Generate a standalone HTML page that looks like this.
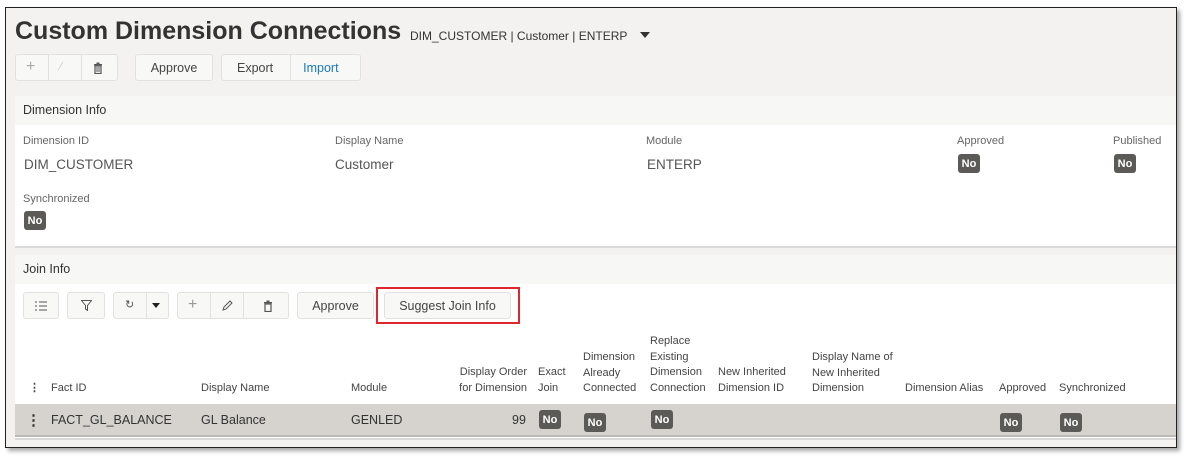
<!DOCTYPE html>
<html><head><meta charset="utf-8"><style>
*{margin:0;padding:0;box-sizing:border-box}
body{width:1187px;height:460px;background:#fff;font-family:"Liberation Sans",sans-serif;position:relative;overflow:hidden;color:#333}
.a{position:absolute;white-space:nowrap}
#frame{position:absolute;left:5px;top:7px;width:1172px;height:441px;border:1px solid #222;background:#f4f1f1;overflow:hidden;box-shadow:3px 3px 4px rgba(0,0,0,.35)}
.panel{position:absolute;left:9px;width:1170px;background:#fff;border-bottom:2px solid #dcdad8}
.ph{position:absolute;left:0;top:0;width:100%;background:#f7f7f6;font-size:12.5px;color:#333;padding-left:8px}
.btn{position:absolute;height:27px;border:1px solid #e3e1df;border-radius:3px;background:#f8f8f7;font-size:12.5px;color:#444;display:flex;align-items:center;justify-content:center}
.lbl{font-size:11px;color:#666}
.val{font-size:13.5px;color:#555}
.no{position:absolute;background:#5c5a56;color:#fff;font-weight:bold;font-size:11px;border-radius:3px;width:22px;height:19px;display:flex;align-items:center;justify-content:center}
.th{font-size:11px;color:#444;line-height:15.7px}
.td{font-size:12.5px;color:#333}
.sep{position:absolute;top:0;width:1px;height:100%;background:#e3e1df}
</style></head><body>
<div id="frame">
<div class="a" style="left:9px;top:9px;font-size:25px;font-weight:bold;color:#333">Custom Dimension Connections</div>
<div class="a" style="left:404px;top:21px;font-size:12px;color:#333">DIM_CUSTOMER | Customer | ENTERP</div>
<div class="a" style="left:634px;top:24px;width:0;height:0;border-left:5px solid transparent;border-right:5px solid transparent;border-top:6px solid #333"></div>

<div class="btn" style="left:9px;top:46px;width:103px;">
 <div class="sep" style="left:32px"></div><div class="sep" style="left:65px"></div>
 <span class="a" style="left:10px;top:3px;color:#aaa;font-size:16px">+</span>
 <span class="a" style="left:44px;top:4px;color:#ccc;font-size:12px">&#x2215;</span>
 <svg class="a" style="left:77px;top:7px" width="10" height="12" viewBox="0 0 10 12"><rect x="1" y="2" width="8" height="1.4" fill="#555"/><rect x="3.5" y="0.5" width="3" height="1.5" fill="#555"/><rect x="2" y="4" width="6" height="7.5" fill="none" stroke="#555" stroke-width="1.2"/><path d="M4 5v5M6 5v5" stroke="#555"/></svg>
</div>
<div class="btn" style="left:129px;top:46px;width:78px">Approve</div>
<div class="btn" style="left:215px;top:46px;width:140px;justify-content:flex-start">
 <span style="margin-left:15px">Export</span><div class="sep" style="left:68px"></div>
 <span style="margin-left:30px;color:#1a79b5">Import</span></div>

<div class="panel" style="top:88px;height:152px">
 <div class="ph" style="height:29px;line-height:28px">Dimension Info</div>
 <div class="a lbl" style="left:8px;top:39px">Dimension ID</div>
 <div class="a val" style="left:9px;top:61px">DIM_CUSTOMER</div>
 <div class="a lbl" style="left:320px;top:39px">Display Name</div>
 <div class="a val" style="left:320px;top:61px">Customer</div>
 <div class="a lbl" style="left:631px;top:39px">Module</div>
 <div class="a val" style="left:632px;top:61px">ENTERP</div>
 <div class="a lbl" style="left:942px;top:39px">Approved</div>
 <div class="no" style="left:943px;top:58px">No</div>
 <div class="a lbl" style="left:1098px;top:39px">Published</div>
 <div class="no" style="left:1099px;top:58px">No</div>
 <div class="a lbl" style="left:8px;top:97px">Synchronized</div>
 <div class="no" style="left:9px;top:115px">No</div>
</div>

<div class="panel" style="top:247px;height:185px">
 <div class="ph" style="height:29px;line-height:28px">Join Info</div>
 <div class="btn" style="left:8px;top:37px;width:36px"><svg width="12" height="10"><path d="M0 1h2M0 5h2M0 9h2M4 1h8M4 5h8M4 9h8" stroke="#555"/></svg></div>
 <div class="btn" style="left:52px;top:37px;width:38px"><svg width="11" height="11"><path d="M0.5 0.5h10L6.5 5.5v5l-2-1.5v-3.5z" fill="none" stroke="#555"/></svg></div>
 <div class="btn" style="left:98px;top:37px;width:56px"><div class="sep" style="left:32px"></div><span class="a" style="left:11px;top:5px;font-size:11px;color:#555">&#x21BB;</span><span class="a" style="left:38px;top:10px;border-left:4px solid transparent;border-right:4px solid transparent;border-top:5px solid #222"></span></div>
 <div class="btn" style="left:162px;top:37px;width:112px"><div class="sep" style="left:32px"></div><div class="sep" style="left:65px"></div>
  <span class="a" style="left:10px;top:3px;color:#999;font-size:16px">+</span>
  <svg class="a" style="left:44px;top:7px" width="11" height="11"><path d="M1 10l1-3 6-6 2 2-6 6z" fill="none" stroke="#555"/></svg>
  <svg class="a" style="left:85px;top:7px" width="10" height="12" viewBox="0 0 10 12"><rect x="1" y="2" width="8" height="1.4" fill="#555"/><rect x="3.5" y="0.5" width="3" height="1.5" fill="#555"/><rect x="2" y="4" width="6" height="7.5" fill="none" stroke="#555" stroke-width="1.2"/></svg></div>
 <div class="btn" style="left:282px;top:37px;width:77px">Approve</div>
 <div class="a" style="left:361px;top:32px;width:144px;height:37px;border:2px solid #e0262d"></div>
 <div class="btn" style="left:369px;top:37px;width:127px">Suggest Join Info</div>

 <div class="a th" style="left:14px;top:126px;font-weight:bold">&#8942;</div>
 <div class="a th" style="left:36px;top:126px">Fact ID</div>
 <div class="a th" style="left:186px;top:126px">Display Name</div>
 <div class="a th" style="left:336px;top:126px">Module</div>
 <div class="a th" style="left:430px;top:110px;text-align:right;width:82px;white-space:normal">Display Order for Dimension</div>
 <div class="a th" style="left:523px;top:110px">Exact<br>Join</div>
 <div class="a th" style="left:568px;top:95px">Dimension<br>Already<br>Connected</div>
 <div class="a th" style="left:635px;top:79px">Replace<br>Existing<br>Dimension<br>Connection</div>
 <div class="a th" style="left:703px;top:110px">New Inherited<br>Dimension ID</div>
 <div class="a th" style="left:797px;top:95px">Display Name of<br>New Inherited<br>Dimension</div>
 <div class="a th" style="left:890px;top:126px">Dimension Alias</div>
 <div class="a th" style="left:984px;top:126px">Approved</div>
 <div class="a th" style="left:1044px;top:126px">Synchronized</div>

 <div class="a" style="left:0;top:149px;width:1170px;height:33px;background:#d6d3cf;border-bottom:2px solid #bdbab6"></div>
 <div class="a" style="left:11px;top:156px;font-size:15px;font-weight:bold;color:#333">&#8942;</div>
 <div class="a td" style="left:36px;top:158px">FACT_GL_BALANCE</div>
 <div class="a td" style="left:186px;top:158px">GL Balance</div>
 <div class="a td" style="left:336px;top:158px">GENLED</div>
 <div class="a td" style="left:497px;top:158px">99</div>
 <div class="no" style="left:524px;top:155px">No</div>
 <div class="no" style="left:569px;top:158px">No</div>
 <div class="no" style="left:636px;top:155px">No</div>
 <div class="no" style="left:985px;top:158px">No</div>
 <div class="no" style="left:1045px;top:158px">No</div>
</div>
</div>
</body></html>
